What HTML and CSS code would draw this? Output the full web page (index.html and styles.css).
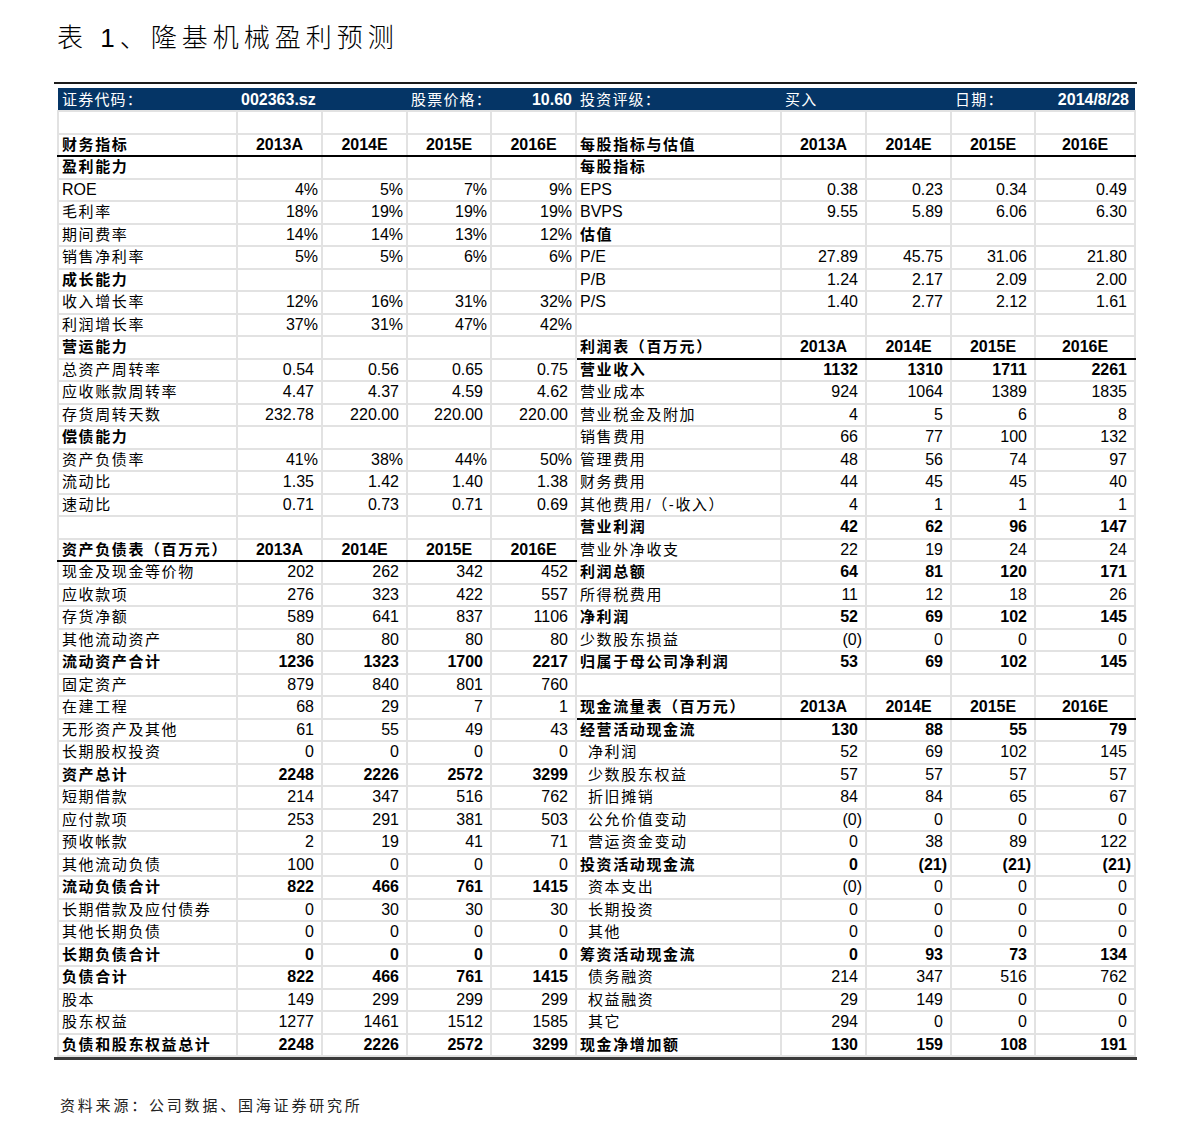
FILE: index.html
```html
<!DOCTYPE html>
<html lang="zh-CN">
<head>
<meta charset="utf-8">
<title>表 1、隆基机械盈利预测</title>
<link rel="stylesheet" href="styles.css">
</head>
<body>
<h1 class="title">表 1、隆基机械盈利预测</h1>
<div class="frame">
<table class="sheet">
<colgroup>
<col style="width:179px"><col style="width:85px"><col style="width:85px"><col style="width:84px"><col style="width:85px">
<col style="width:205px"><col style="width:85px"><col style="width:85px"><col style="width:84px"><col style="width:100px">
</colgroup>
<tbody>
<tr class="bar">
<td class="bl">证券代码：</td><td class="bv" colspan="2">002363.sz</td><td class="bl">股票价格：</td><td class="bn">10.60</td>
<td class="bl">投资评级：</td><td class="bl" colspan="2">买入</td><td class="bl">日期：</td><td class="bn bd">2014/8/28</td>
</tr>
<tr><td class="l"></td><td></td><td></td><td></td><td></td><td class="l"></td><td></td><td></td><td></td><td></td></tr>
<tr><td class="l b k">财务指标</td><td class="y k">2013A</td><td class="y k">2014E</td><td class="y k">2015E</td><td class="y k">2016E</td><td class="l b k">每股指标与估值</td><td class="y k">2013A</td><td class="y k">2014E</td><td class="y k">2015E</td><td class="y k">2016E</td></tr>
<tr><td class="l b">盈利能力</td><td></td><td></td><td></td><td></td><td class="l b">每股指标</td><td></td><td></td><td></td><td></td></tr>
<tr><td class="l lat">ROE</td><td class="h">4%</td><td class="h">5%</td><td class="h">7%</td><td class="h">9%</td><td class="l lat">EPS</td><td>0.38</td><td>0.23</td><td>0.34</td><td>0.49</td></tr>
<tr><td class="l">毛利率</td><td class="h">18%</td><td class="h">19%</td><td class="h">19%</td><td class="h">19%</td><td class="l lat">BVPS</td><td>9.55</td><td>5.89</td><td>6.06</td><td>6.30</td></tr>
<tr><td class="l">期间费率</td><td class="h">14%</td><td class="h">14%</td><td class="h">13%</td><td class="h">12%</td><td class="l b">估值</td><td></td><td></td><td></td><td></td></tr>
<tr><td class="l">销售净利率</td><td class="h">5%</td><td class="h">5%</td><td class="h">6%</td><td class="h">6%</td><td class="l lat">P/E</td><td>27.89</td><td>45.75</td><td>31.06</td><td>21.80</td></tr>
<tr><td class="l b">成长能力</td><td></td><td></td><td></td><td></td><td class="l lat">P/B</td><td>1.24</td><td>2.17</td><td>2.09</td><td>2.00</td></tr>
<tr><td class="l">收入增长率</td><td class="h">12%</td><td class="h">16%</td><td class="h">31%</td><td class="h">32%</td><td class="l lat">P/S</td><td>1.40</td><td>2.77</td><td>2.12</td><td>1.61</td></tr>
<tr><td class="l">利润增长率</td><td class="h">37%</td><td class="h">31%</td><td class="h">47%</td><td class="h">42%</td><td class="l"></td><td></td><td></td><td></td><td></td></tr>
<tr><td class="l b">营运能力</td><td></td><td></td><td></td><td></td><td class="l b k">利润表（百万元）</td><td class="y k">2013A</td><td class="y k">2014E</td><td class="y k">2015E</td><td class="y k">2016E</td></tr>
<tr><td class="l">总资产周转率</td><td>0.54</td><td>0.56</td><td>0.65</td><td>0.75</td><td class="l b">营业收入</td><td class="b">1132</td><td class="b">1310</td><td class="b">1711</td><td class="b">2261</td></tr>
<tr><td class="l">应收账款周转率</td><td>4.47</td><td>4.37</td><td>4.59</td><td>4.62</td><td class="l">营业成本</td><td>924</td><td>1064</td><td>1389</td><td>1835</td></tr>
<tr><td class="l">存货周转天数</td><td>232.78</td><td>220.00</td><td>220.00</td><td>220.00</td><td class="l">营业税金及附加</td><td>4</td><td>5</td><td>6</td><td>8</td></tr>
<tr><td class="l b">偿债能力</td><td></td><td></td><td></td><td></td><td class="l">销售费用</td><td>66</td><td>77</td><td>100</td><td>132</td></tr>
<tr><td class="l">资产负债率</td><td class="h">41%</td><td class="h">38%</td><td class="h">44%</td><td class="h">50%</td><td class="l">管理费用</td><td>48</td><td>56</td><td>74</td><td>97</td></tr>
<tr><td class="l">流动比</td><td>1.35</td><td>1.42</td><td>1.40</td><td>1.38</td><td class="l">财务费用</td><td>44</td><td>45</td><td>45</td><td>40</td></tr>
<tr><td class="l">速动比</td><td>0.71</td><td>0.73</td><td>0.71</td><td>0.69</td><td class="l">其他费用/（-收入）</td><td>4</td><td>1</td><td>1</td><td>1</td></tr>
<tr><td class="l"></td><td></td><td></td><td></td><td></td><td class="l b">营业利润</td><td class="b">42</td><td class="b">62</td><td class="b">96</td><td class="b">147</td></tr>
<tr><td class="l b k">资产负债表（百万元）</td><td class="y k">2013A</td><td class="y k">2014E</td><td class="y k">2015E</td><td class="y k">2016E</td><td class="l">营业外净收支</td><td>22</td><td>19</td><td>24</td><td>24</td></tr>
<tr><td class="l">现金及现金等价物</td><td>202</td><td>262</td><td>342</td><td>452</td><td class="l b">利润总额</td><td class="b">64</td><td class="b">81</td><td class="b">120</td><td class="b">171</td></tr>
<tr><td class="l">应收款项</td><td>276</td><td>323</td><td>422</td><td>557</td><td class="l">所得税费用</td><td>11</td><td>12</td><td>18</td><td>26</td></tr>
<tr><td class="l">存货净额</td><td>589</td><td>641</td><td>837</td><td>1106</td><td class="l b">净利润</td><td class="b">52</td><td class="b">69</td><td class="b">102</td><td class="b">145</td></tr>
<tr><td class="l">其他流动资产</td><td>80</td><td>80</td><td>80</td><td>80</td><td class="l">少数股东损益</td><td class="h">(0)</td><td>0</td><td>0</td><td>0</td></tr>
<tr><td class="l b">流动资产合计</td><td class="b">1236</td><td class="b">1323</td><td class="b">1700</td><td class="b">2217</td><td class="l b">归属于母公司净利润</td><td class="b">53</td><td class="b">69</td><td class="b">102</td><td class="b">145</td></tr>
<tr><td class="l">固定资产</td><td>879</td><td>840</td><td>801</td><td>760</td><td class="l"></td><td></td><td></td><td></td><td></td></tr>
<tr><td class="l">在建工程</td><td>68</td><td>29</td><td>7</td><td>1</td><td class="l b k">现金流量表（百万元）</td><td class="y k">2013A</td><td class="y k">2014E</td><td class="y k">2015E</td><td class="y k">2016E</td></tr>
<tr><td class="l">无形资产及其他</td><td>61</td><td>55</td><td>49</td><td>43</td><td class="l b">经营活动现金流</td><td class="b">130</td><td class="b">88</td><td class="b">55</td><td class="b">79</td></tr>
<tr><td class="l">长期股权投资</td><td>0</td><td>0</td><td>0</td><td>0</td><td class="l i">净利润</td><td>52</td><td>69</td><td>102</td><td>145</td></tr>
<tr><td class="l b">资产总计</td><td class="b">2248</td><td class="b">2226</td><td class="b">2572</td><td class="b">3299</td><td class="l i">少数股东权益</td><td>57</td><td>57</td><td>57</td><td>57</td></tr>
<tr><td class="l">短期借款</td><td>214</td><td>347</td><td>516</td><td>762</td><td class="l i">折旧摊销</td><td>84</td><td>84</td><td>65</td><td>67</td></tr>
<tr><td class="l">应付款项</td><td>253</td><td>291</td><td>381</td><td>503</td><td class="l i">公允价值变动</td><td class="h">(0)</td><td>0</td><td>0</td><td>0</td></tr>
<tr><td class="l">预收帐款</td><td>2</td><td>19</td><td>41</td><td>71</td><td class="l i">营运资金变动</td><td>0</td><td>38</td><td>89</td><td>122</td></tr>
<tr><td class="l">其他流动负债</td><td>100</td><td>0</td><td>0</td><td>0</td><td class="l b">投资活动现金流</td><td class="b">0</td><td class="b h">(21)</td><td class="b h">(21)</td><td class="b h">(21)</td></tr>
<tr><td class="l b">流动负债合计</td><td class="b">822</td><td class="b">466</td><td class="b">761</td><td class="b">1415</td><td class="l i">资本支出</td><td class="h">(0)</td><td>0</td><td>0</td><td>0</td></tr>
<tr><td class="l">长期借款及应付债券</td><td>0</td><td>30</td><td>30</td><td>30</td><td class="l i">长期投资</td><td>0</td><td>0</td><td>0</td><td>0</td></tr>
<tr><td class="l">其他长期负债</td><td>0</td><td>0</td><td>0</td><td>0</td><td class="l i">其他</td><td>0</td><td>0</td><td>0</td><td>0</td></tr>
<tr><td class="l b">长期负债合计</td><td class="b">0</td><td class="b">0</td><td class="b">0</td><td class="b">0</td><td class="l b">筹资活动现金流</td><td class="b">0</td><td class="b">93</td><td class="b">73</td><td class="b">134</td></tr>
<tr><td class="l b">负债合计</td><td class="b">822</td><td class="b">466</td><td class="b">761</td><td class="b">1415</td><td class="l i">债务融资</td><td>214</td><td>347</td><td>516</td><td>762</td></tr>
<tr><td class="l">股本</td><td>149</td><td>299</td><td>299</td><td>299</td><td class="l i">权益融资</td><td>29</td><td>149</td><td>0</td><td>0</td></tr>
<tr><td class="l">股东权益</td><td>1277</td><td>1461</td><td>1512</td><td>1585</td><td class="l i">其它</td><td>294</td><td>0</td><td>0</td><td>0</td></tr>
<tr><td class="l b">负债和股东权益总计</td><td class="b">2248</td><td class="b">2226</td><td class="b">2572</td><td class="b">3299</td><td class="l b">现金净增加额</td><td class="b">130</td><td class="b">159</td><td class="b">108</td><td class="b">191</td></tr>
</tbody>
</table>
</div>
<p class="source">资料来源：公司数据、国海证券研究所</p>
</body>
</html>
```

FILE: styles.css
```css
* { box-sizing: border-box; }

body {
  margin: 0;
  background: #ffffff;
  color: #000000;
  font-family: "Liberation Sans", "Noto Sans CJK SC", sans-serif;
}

.title {
  margin: 0;
  padding: 18px 0 0 57px;
  height: 58px;
  font-family: "Liberation Sans", "Noto Sans CJK SC", sans-serif;
  font-size: 26px;
  font-weight: 300;
  line-height: 40px;
  letter-spacing: 5px;
}

.frame {
  margin: 24px 0 0 54px;
  width: 1083px;
  padding: 4px 3px 0 3px;
  border-top: 2px solid #1c1c1c;
  border-bottom: 3px solid #3a3a3a;
}

.sheet {
  border-collapse: collapse;
  table-layout: fixed;
  width: 1077px;
  font-size: 16px;
}

.sheet tr { height: 22.5px; }

.sheet td {
  padding: 0 7px 0 0;
  text-align: right;
  border: 2px solid #e2e2e2;
  white-space: nowrap;
  overflow: hidden;
  line-height: 20px;
}

.sheet .bar { height: 23px; }

.sheet .bar td {
  background: #053566;
  color: #ffffff;
  border: none;
  padding: 1px 0 0 0;
  overflow: visible;
}

.sheet .bar .bl {
  text-align: left;
  padding-left: 4px;
  font-size: 15px;
  letter-spacing: 1.2px;
}

.sheet .bar .bv {
  text-align: left;
  padding-left: 4px;
  font-weight: 700;
}

.sheet .bar .bn {
  text-align: right;
  padding-right: 4px;
  font-weight: 700;
}

.sheet .bar .bd { padding-right: 6px; }

.sheet .l {
  text-align: left;
  padding: 0 0 0 3px;
  font-size: 15px;
  letter-spacing: 1.6px;
}

.sheet .lat {
  font-size: 16px;
  letter-spacing: 0;
}

.sheet .i { padding-left: 11px; }

.sheet .b { font-weight: 700; }

.sheet .y {
  text-align: center;
  font-weight: 700;
  padding: 0;
}

.sheet .h { padding-right: 3px; }

.sheet .k { border-bottom: 2px solid #000000; }

.source {
  margin: 36px 0 0 60px;
  font-family: "Liberation Sans", "Noto Sans CJK SC", sans-serif;
  font-size: 15px;
  line-height: 20px;
  letter-spacing: 2.8px;
  color: #222222;
}
```
